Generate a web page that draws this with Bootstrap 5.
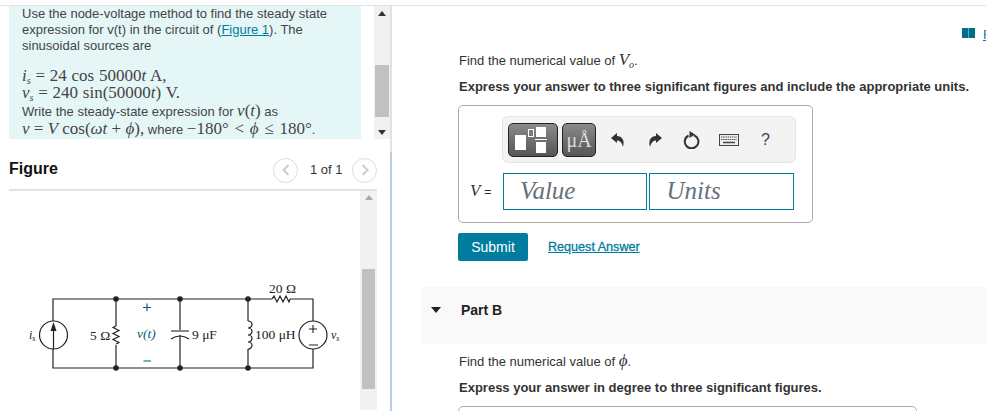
<!DOCTYPE html>
<html lang="en">
<head>
    <meta charset="UTF-8">
    <meta name="viewport" content="width=device-width, initial-scale=1.0">
    <title>Part A</title>
    <link href="https://cdn.jsdelivr.net/npm/bootstrap@5.3.0/dist/css/bootstrap.min.css" rel="stylesheet">
    <style>
        html, body { height: 411px; overflow: hidden; }
        body { font-family: "Liberation Sans", Arial, sans-serif; font-size: 13px; line-height: 16px; color: #333; background: #fff; }
        a { color: #007c9e; }
        .mth { font-family: "Liberation Serif", serif; font-size: 17px; line-height: 16px; }
        .mth i { font-style: italic; }
        .mth sub { font-size: 10px; bottom: -3px; line-height: 0; font-style: italic; }
        .mth-wide { word-spacing: 1.500px; }
        .page-wrap { margin-top: 5px; border-top: 1px solid #e2e2e2; height: 406px; width: 986px; overflow: hidden; }
        .left-pane { width: 392px; flex: none; }
        .intro-row { height: 146px; border-right: 2px solid #e2e2e2; }
        .intro-box { width: 352px; height: 133px; margin-left: 9px; padding: 0 0 0 13px; background: #e5f6f7; color: #444; }
        .intro-box p { margin: 0; }
        .intro-text { height: 47px; }
        .math-lines { padding-top: 14px; height: 50px; line-height: 17px; word-spacing: .5px; }
        .math-lines div { height: 17px; }
        .after-math { line-height: 18px; height: 18px; white-space: nowrap; }
        .bar-top { width: 16px; height: 133px; margin-left: 13px; background: #f1f1f1; padding: 0 1px; }
        .bar-fig { width: 17px; height: 219px; background: #f1f1f1; padding: 0 2px; }
        .bar-thumb { background: #c1c1c1; }
        .bar-arrow { width: 13px; height: 14px; display: flex; align-items: center; justify-content: center; flex: none; }
        .fig-pane { height: 260px; border-right: 2px solid #b9cde0; }
        .fig-head { width: 368px; height: 39px; margin-left: 9px; border-bottom: 2px solid #e2e2e2; padding-bottom: 6px; }
        .fig-title { font-size: 16px; font-weight: 700; color: #111; margin-bottom: 6px; }
        .pager-btn { width: 25px; height: 25px; border: 1px solid #ddd; border-radius: 50%; background: #fff; padding: 0; display: flex; align-items: center; justify-content: center; }
        .pager-count { width: 31px; margin: 0 11px 0 12px; white-space: nowrap; }
        .right-pane { flex: 1 1 auto; min-width: 0; position: relative; }
        .review-link { position: absolute; left: 570px; top: 21px; display: flex; gap: 8px; font-size: 13px; white-space: nowrap; }
        .q-col { margin-left: 67px; padding-top: 46px; }
        .q-line { margin: 0; height: 17px; white-space: nowrap; }
        .q-bold { font-weight: 700; margin-top: 10px; }
        .answer-box { width: 355px; height: 118px; margin-top: 9px; margin-left: -1px; border: 1px solid #aaa; border-radius: 5px; padding: 10px 16px 0 11px; }
        .tool-bar { width: 294px; height: 47px; margin-left: 32px; background: #f3f3f3; border: 1px solid #e5e5e5; border-radius: 6px; padding-left: 5px; padding-top: 6px; }
        .tool-dark { height: 34px; border: 1px solid #222; border-radius: 5px; background: linear-gradient(#8a8a8a, #565656); flex: none; display: flex; align-items: center; justify-content: center; padding: 0; }
        .tool-units { width: 34px; margin-left: 4px; margin-right: 3px; color: #ddd; font-family: "Liberation Serif", serif; font-size: 20px; }
        .tool-tpl { width: 50px; }
        .tool-plain { width: 37px; height: 34px; display: flex; align-items: center; justify-content: center; flex: none; }
        .eq-label { width: 33px; margin-left: 1px; white-space: nowrap; }
        .ans-input { width: 145px; height: 37px; border: 1px solid #007c9e; margin-right: 2px; padding-left: 16px; font-family: "Liberation Serif", serif; font-style: italic; font-size: 25px; line-height: 34px; color: #66707a; }
        .ans-row { margin-top: 10px; margin-left: -1px; }
        .btn-submit { width: 70px; height: 28px; margin-top: 10px; margin-left: -1px; padding: 0; background: #007c9e; color: #fff; border: 0; border-radius: 2px; font-size: 14px; }
        .req-link { font-size: 12.600px; -webkit-text-stroke: .3px #007c9e; margin-left: 20px; margin-top: 10px; line-height: 28px; }
        .part-band { height: 57px; margin-top: 26px; margin-left: -38px; width: 594px; background: #f9f9f9; padding: 15px 0 0 40px; font-weight: 700; font-size: 14px; position: relative; color: #222; }
        .part-tri { width: 0; height: 0; border-left: 5px solid transparent; border-right: 5px solid transparent; border-top: 6px solid #222; position: absolute; left: 10px; top: 20px; }
        .next-box { width: 459px; height: 30px; margin-top: 9px; margin-left: -1px; border: 1px solid #aaa; border-radius: 5px; }
        svg text { font-family: "Liberation Serif", serif; fill: #222; }
    </style>
</head>
<body>
    <div class="page-wrap d-flex">
        <div class="left-pane d-flex flex-column">
            <div class="intro-row d-flex">
                <div class="intro-box">
                    <p class="intro-text">Use the node-voltage method to find the steady state expression for v(t) in the circuit of (<a href="#">Figure 1</a>). The sinusoidal sources are</p>
                    <div class="math-lines mth">
                        <div><i>i<sub>s</sub></i> = 24 cos 50000<i>t</i> A,</div>
                        <div><i>v<sub>s</sub></i> = 240 sin(50000<i>t</i>) V.</div>
                    </div>
                    <p class="after-math">Write the steady-state expression for <span class="mth"><i>v</i>(<i>t</i>)</span> as</p>
                    <p class="after-math"><span class="mth"><i>v</i> = <i>V</i> cos(<i>ωt</i> + <i>ϕ</i>),</span> where <span class="mth mth-wide">−180° &lt; <i>ϕ</i> ≤ 180°</span>.</p>
                </div>
                <div class="bar-top d-flex flex-column">
                    <div class="bar-arrow"><svg width="8" height="5"><path d="M4 0 8 5H0z" fill="#333"/></svg></div>
                    <div style="height:45px"></div>
                    <div class="bar-thumb" style="height:52px"></div>
                    <div class="flex-grow-1"></div>
                    <div class="bar-arrow"><svg width="8" height="5"><path d="M0 0H8L4 5z" fill="#333"/></svg></div>
                </div>
            </div>
            <div class="fig-pane">
                <div class="fig-head d-flex align-items-end justify-content-between">
                    <div class="fig-title">Figure</div>
                    <div class="d-flex align-items-center">
                        <button class="pager-btn"><svg width="10" height="14"><path d="M7.500 2 2.500 7 7.500 12" fill="none" stroke="#ccc" stroke-width="2"/></svg></button>
                        <span class="pager-count">1 of 1</span>
                        <button class="pager-btn"><svg width="10" height="14"><path d="M2.500 2 7.500 7 2.500 12" fill="none" stroke="#ccc" stroke-width="2"/></svg></button>
                    </div>
                </div>
                <div class="d-flex">
                    <svg width="360" height="219" viewBox="0 192 360 219" style="flex:none">
                        <g fill="none" stroke="#222" stroke-width="1.200">
                            <path d="M53 322V300H272"/>
                            <path d="M290 300H313V322"/>
                            <path d="M313 350V369H53V350"/>
                            <path d="M116 300V327"/>
                            <path d="M116 346V369"/>
                            <path d="M116 327l-3 1.500 6 3-6 3 6 3-6 3 6 3-3 1.500"/>
                            <path d="M180 300V331"/>
                            <path d="M180 336V369"/>
                            <path d="M171 340Q180 334 189 340"/>
                            <path d="M248 300V322"/>
                            <path d="M248 322a4 3.500 0 0 1 0 7a4 3.500 0 0 1 0 7a4 3.500 0 0 1 0 7a4 3.500 0 0 1 0 7"/>
                            <path d="M248 350V369"/>
                            <path d="M272 300l2-3 3 6 3-6 3 6 3-6 3 6 1-3"/>
                            <circle cx="53.500" cy="336" r="14"/>
                            <circle cx="313" cy="336" r="14"/>
                            <path d="M53.500 350V331"/>
                        </g>
                        <path d="M53.500 323 50.500 332H56.500z" fill="#222"/>
                        <rect x="171" y="331" width="18" height="2" fill="#888"/>
                        <g fill="#222">
                            <circle cx="116" cy="300" r="2.800"/><circle cx="180" cy="300" r="2.800"/><circle cx="248" cy="300" r="2.800"/>
                            <circle cx="116" cy="369" r="2.800"/><circle cx="180" cy="369" r="2.800"/><circle cx="248" cy="369" r="2.800"/>
                        </g>
                        <path d="M147 304.500V312M143 308.500H151M143.500 362H151" stroke="#0a5a80" stroke-width="1.200" fill="none"/>
                        <path d="M309 330H317M313 326V334M309 346H318" stroke="#222" stroke-width="1.100" fill="none"/>
                        <text x="269" y="294" font-size="13.500">20 Ω</text>
                        <text x="90" y="341" font-size="13.500">5 Ω</text>
                        <text x="137" y="339" font-size="13.500" font-style="italic" style="fill:#0a5a80">v(t)</text>
                        <text x="192" y="340" font-size="13.500">9 μF</text>
                        <text x="255" y="340" font-size="13.500">100 μH</text>
                        <text x="29" y="340" font-size="12" font-style="italic">i<tspan font-size="8" dy="2">s</tspan></text>
                        <text x="331" y="340" font-size="12" font-style="italic">v<tspan font-size="8" dy="2">s</tspan></text>
                    </svg>
                    <div class="bar-fig d-flex flex-column">
                        <div class="bar-arrow"><svg width="8" height="5"><path d="M4 0 8 5H0z" fill="#aaa"/></svg></div>
                        <div style="height:64px"></div>
                        <div class="bar-thumb" style="height:120px"></div>
                    </div>
                </div>
            </div>
        </div>
        <div class="right-pane">
            <div class="review-link">
                <svg width="13" height="10" viewBox="0 0 13 10" style="margin-top:1px"><path d="M0 0H6V10H0zM7 0H13V10H7z" fill="#006d8c"/><path d="M6 0H7V10H6z" fill="#6aa3b5"/></svg>
                <a href="#">Review</a>
            </div>
            <div class="q-col">
                <p class="q-line">Find the numerical value of <span class="mth"><i>V<sub>o</sub></i></span>.</p>
                <p class="q-line q-bold">Express your answer to three significant figures and include the appropriate units.</p>
                <div class="answer-box">
                    <div class="tool-bar d-flex">
                        <button class="tool-dark tool-tpl" aria-label="templates">
                            <svg width="36" height="28" viewBox="0 0 36 28"><path d="M0 9H11V24H0zM21 1H31V11H21zM21 16H31V27H21zM20 13H32V14H20z" fill="#fff"/><rect x="13.500" y="3.500" width="5" height="7" fill="none" stroke="#fff"/></svg>
                        </button>
                        <button class="tool-dark tool-units">μÅ</button>
                        <div class="tool-plain"><svg width="16" height="16" viewBox="0 0 16 16"><path d="M1 6 7 1V4C12 4 15 8 13 15 12 11 10 8.500 7 8.500V11z" fill="#333"/></svg></div>
                        <div class="tool-plain"><svg width="16" height="16" viewBox="0 0 16 16"><path d="M15 6 9 1V4C4 4 1 8 3 15 4 11 6 8.500 9 8.500V11z" fill="#333"/></svg></div>
                        <div class="tool-plain"><svg width="17" height="18" viewBox="0 0 17 18"><path d="M5.500 4.500A6.800 6.800 0 1 0 11 4.200" fill="none" stroke="#333" stroke-width="2"/><path d="M6.500 0 12 3.500 6.500 7z" fill="#333"/></svg></div>
                        <div class="tool-plain"><svg width="20" height="12" viewBox="0 0 20 12"><rect x=".5" y=".5" width="19" height="11" fill="#eee" stroke="#444"/><path d="M2 3H18M2 5.500H18" stroke="#555" stroke-dasharray="1.500 .7"/><path d="M4 8.500H16" stroke="#444" stroke-width="1.500"/></svg></div>
                        <div class="tool-plain" style="font-size:16px;color:#444">?</div>
                    </div>
                    <div class="ans-row d-flex align-items-center">
                        <div class="eq-label"><span class="mth"><i>V</i></span> =</div>
                        <div class="ans-input">Value</div>
                        <div class="ans-input">Units</div>
                    </div>
                </div>
                <div class="d-flex">
                    <button class="btn btn-submit">Submit</button>
                    <a class="req-link" href="#">Request Answer</a>
                </div>
                <div class="part-band"><span class="part-tri"></span>Part B</div>
                <p class="q-line" style="margin-top:9px">Find the numerical value of <span class="mth"><i>ϕ</i></span>.</p>
                <p class="q-line q-bold">Express your answer in degree to three significant figures.</p>
                <div class="next-box"></div>
            </div>
        </div>
    </div>
    <script src="https://cdn.jsdelivr.net/npm/bootstrap@5.3.0/dist/js/bootstrap.bundle.min.js"></script>
</body>
</html>
